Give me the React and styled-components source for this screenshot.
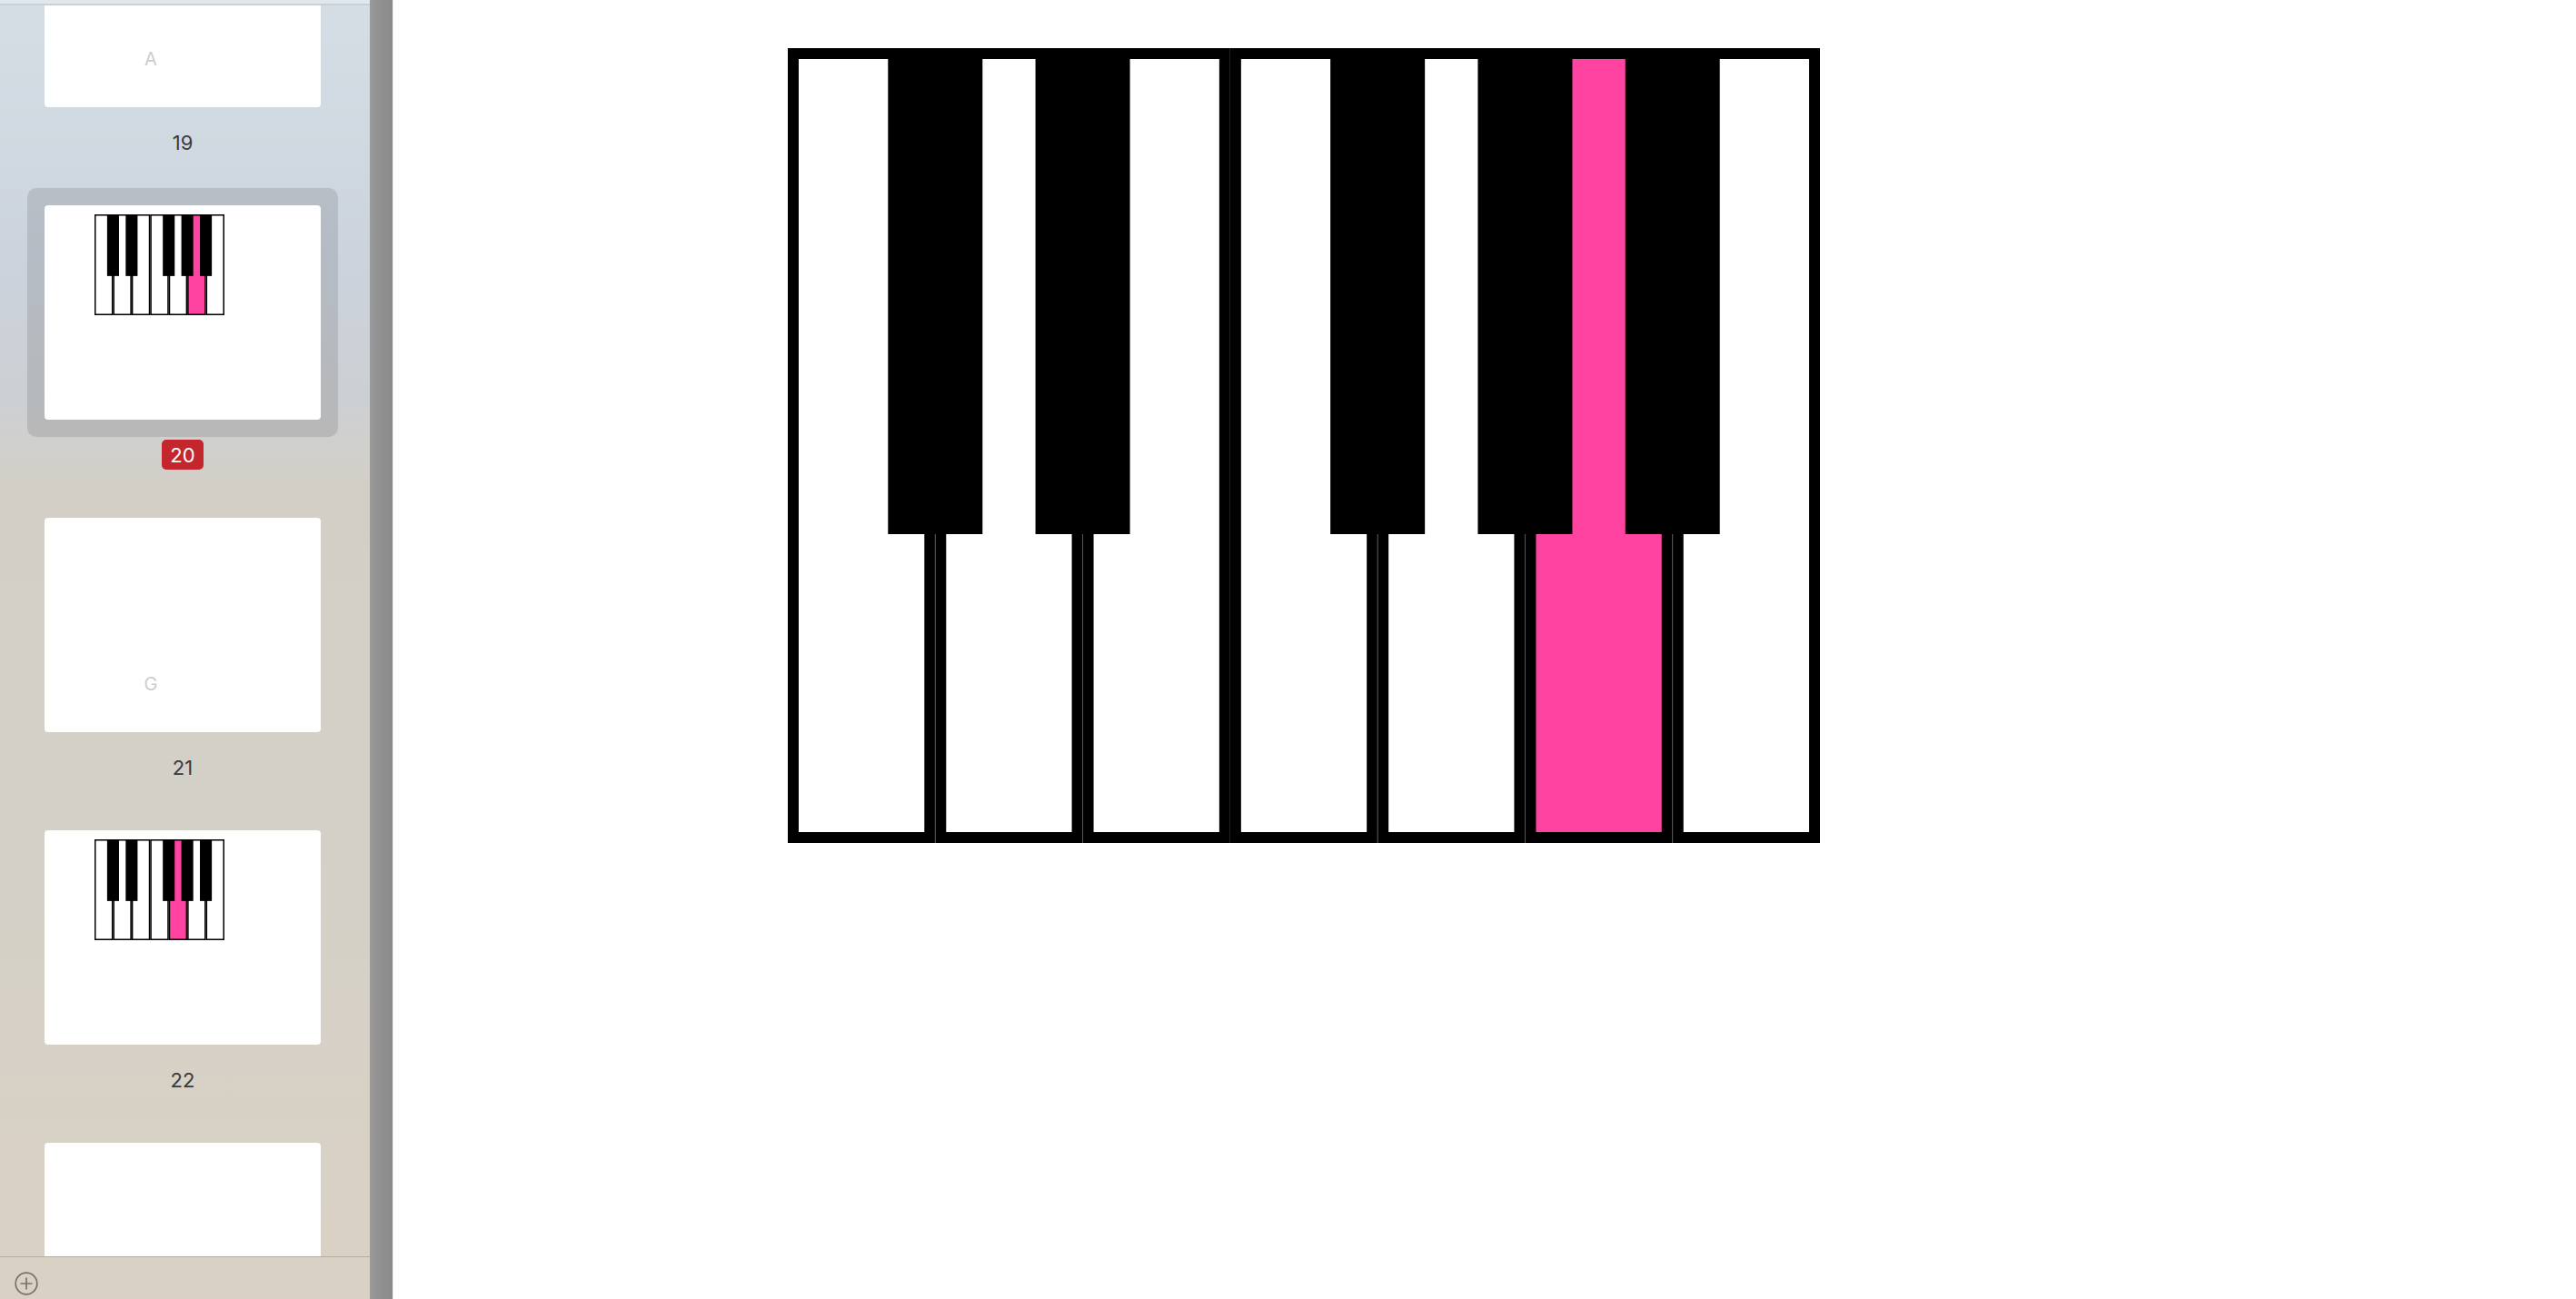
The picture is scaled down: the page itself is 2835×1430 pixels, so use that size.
import React from 'react';
import styled, { createGlobalStyle } from 'styled-components';

const PINK = '#fe44a0';
const KB_W = 1136;
const KB_H = 875;
const KEY_W = KB_W / 7;
const EDGE = 12;
const BLACK_W = 104;
const BLACK_H = 535;
const BLACK_AT = [1, 2, 4, 5, 6];

const slides = [
  { n: 19, letter: 'A' },
  { n: 20, lit: 5, selected: true },
  { n: 21, letter: 'G' },
  { n: 22, lit: 4 },
  { n: 23 },
];

function Keyboard({ lit, width, height, seams }) {
  return (
    <svg width={width} height={height} viewBox={`0 0 ${KB_W} ${KB_H}`} preserveAspectRatio="none">
      {Array.from({ length: 7 }, (_, i) => (
        <g key={i}>
          <rect x={i * KEY_W} y={0} width={KEY_W} height={KB_H} fill="#000" />
          <rect
            x={i * KEY_W + EDGE}
            y={EDGE}
            width={KEY_W - 2 * EDGE}
            height={KB_H - 2 * EDGE}
            fill={i === lit ? PINK : '#fff'}
          />
        </g>
      ))}
      {BLACK_AT.map((b) => (
        <rect key={b} x={b * KEY_W - BLACK_W / 2} y={0} width={BLACK_W} height={BLACK_H} fill="#000" />
      ))}
      {seams &&
        BLACK_AT.map((b) => (
          <line key={b} x1={b * KEY_W} x2={b * KEY_W} y1={BLACK_H} y2={KB_H} stroke="#555" strokeWidth="1" />
        ))}
    </svg>
  );
}

function AddIcon() {
  return (
    <svg width="26" height="26" viewBox="0 0 26 26">
      <circle cx="13" cy="13" r="11.8" fill="none" stroke="#77726b" strokeWidth="1.7" />
      <path d="M13 6.5v13M6.5 13h13" stroke="#77726b" strokeWidth="1.7" />
    </svg>
  );
}

export default function App() {
  return (
    <>
      <GlobalStyle />
      <Window>
        <Sidebar>
          <TopBar />
          <List>
            <ListInner>
              {slides.map((s) => (
                <Item key={s.n}>
                  <Frame selected={s.selected}>
                    <Card>
                      {s.lit !== undefined && (
                        <Thumb>
                          <Keyboard lit={s.lit} width={143} height={111} />
                        </Thumb>
                      )}
                      {s.letter && <Letter>{s.letter}</Letter>}
                    </Card>
                  </Frame>
                  <Caption>
                    <Num selected={s.selected}>{s.n}</Num>
                  </Caption>
                </Item>
              ))}
            </ListInner>
          </List>
          <BottomBar>
            <AddIcon />
          </BottomBar>
        </Sidebar>
        <Splitter />
        <Main>
          <Keyboard lit={5} width={KB_W} height={KB_H} seams />
        </Main>
      </Window>
    </>
  );
}

const GlobalStyle = createGlobalStyle`
  html, body {
    margin: 0;
    padding: 0;
    width: 2835px;
    height: 1430px;
    overflow: hidden;
    background: #fff;
    font-family: Inter, "Liberation Sans", sans-serif;
  }
  #root {
    height: 100%;
  }
`;

const Window = styled.div`
  display: flex;
  height: 1430px;
`;

const Sidebar = styled.div`
  width: 407px;
  flex-shrink: 0;
  display: flex;
  flex-direction: column;
  background: linear-gradient(
    to bottom,
    #d5dee5 0%,
    #ccd3dd 20%,
    #ccd0d4 30%,
    #d3cfc6 38%,
    #d3d0c8 60%,
    #dad1c4 100%
  );
`;

const TopBar = styled.div`
  height: 4px;
  flex-shrink: 0;
  background: rgba(255, 255, 255, 0.3);
  border-bottom: 2px solid rgba(0, 0, 0, 0.1);
`;

const List = styled.div`
  flex: 1;
  overflow: hidden;
  padding-left: 30px;
`;

const ListInner = styled.div`
  margin-top: -143px;
  width: 342px;
`;

const Item = styled.div`
  display: flex;
  flex-direction: column;
`;

const Frame = styled.div`
  padding: 19px;
  border-radius: 10px;
  background: ${(p) => (p.selected ? 'rgba(0, 0, 0, 0.11)' : 'transparent')};
`;

const Card = styled.div`
  position: relative;
  height: 236px;
  background: #fff;
  border-radius: 4px;
  overflow: hidden;
`;

const Thumb = styled.div`
  position: absolute;
  left: 55px;
  top: 10px;
  line-height: 0;
`;

const Letter = styled.span`
  position: absolute;
  left: 117px;
  top: 183px;
  transform: translate(-50%, -50%);
  font-size: 20px;
  color: #cdcdcd;
`;

const Caption = styled.div`
  height: 33px;
  margin: 3px 0 34px;
  display: flex;
  justify-content: center;
  align-items: center;
`;

const Num = styled.span`
  display: flex;
  align-items: center;
  height: 33px;
  padding: 0 9px;
  border-radius: 5px;
  font-size: 22px;
  color: ${(p) => (p.selected ? '#fff' : '#3a3a3a')};
  background: ${(p) => (p.selected ? '#c4262e' : 'transparent')};
`;

const BottomBar = styled.div`
  height: 47px;
  flex-shrink: 0;
  box-sizing: border-box;
  border-top: 1px solid #b2aca2;
  padding: 16px 0 0 16px;
  line-height: 0;
`;

const Splitter = styled.div`
  width: 25px;
  flex-shrink: 0;
  background: linear-gradient(to right, #9b9b9b, #939393 30%, #8a8a8a);
  border-right: 1px solid #ececec;
`;

const Main = styled.div`
  flex: 1;
  background: #fff;
  padding: 53px 0 0 434px;
  line-height: 0;
`;
